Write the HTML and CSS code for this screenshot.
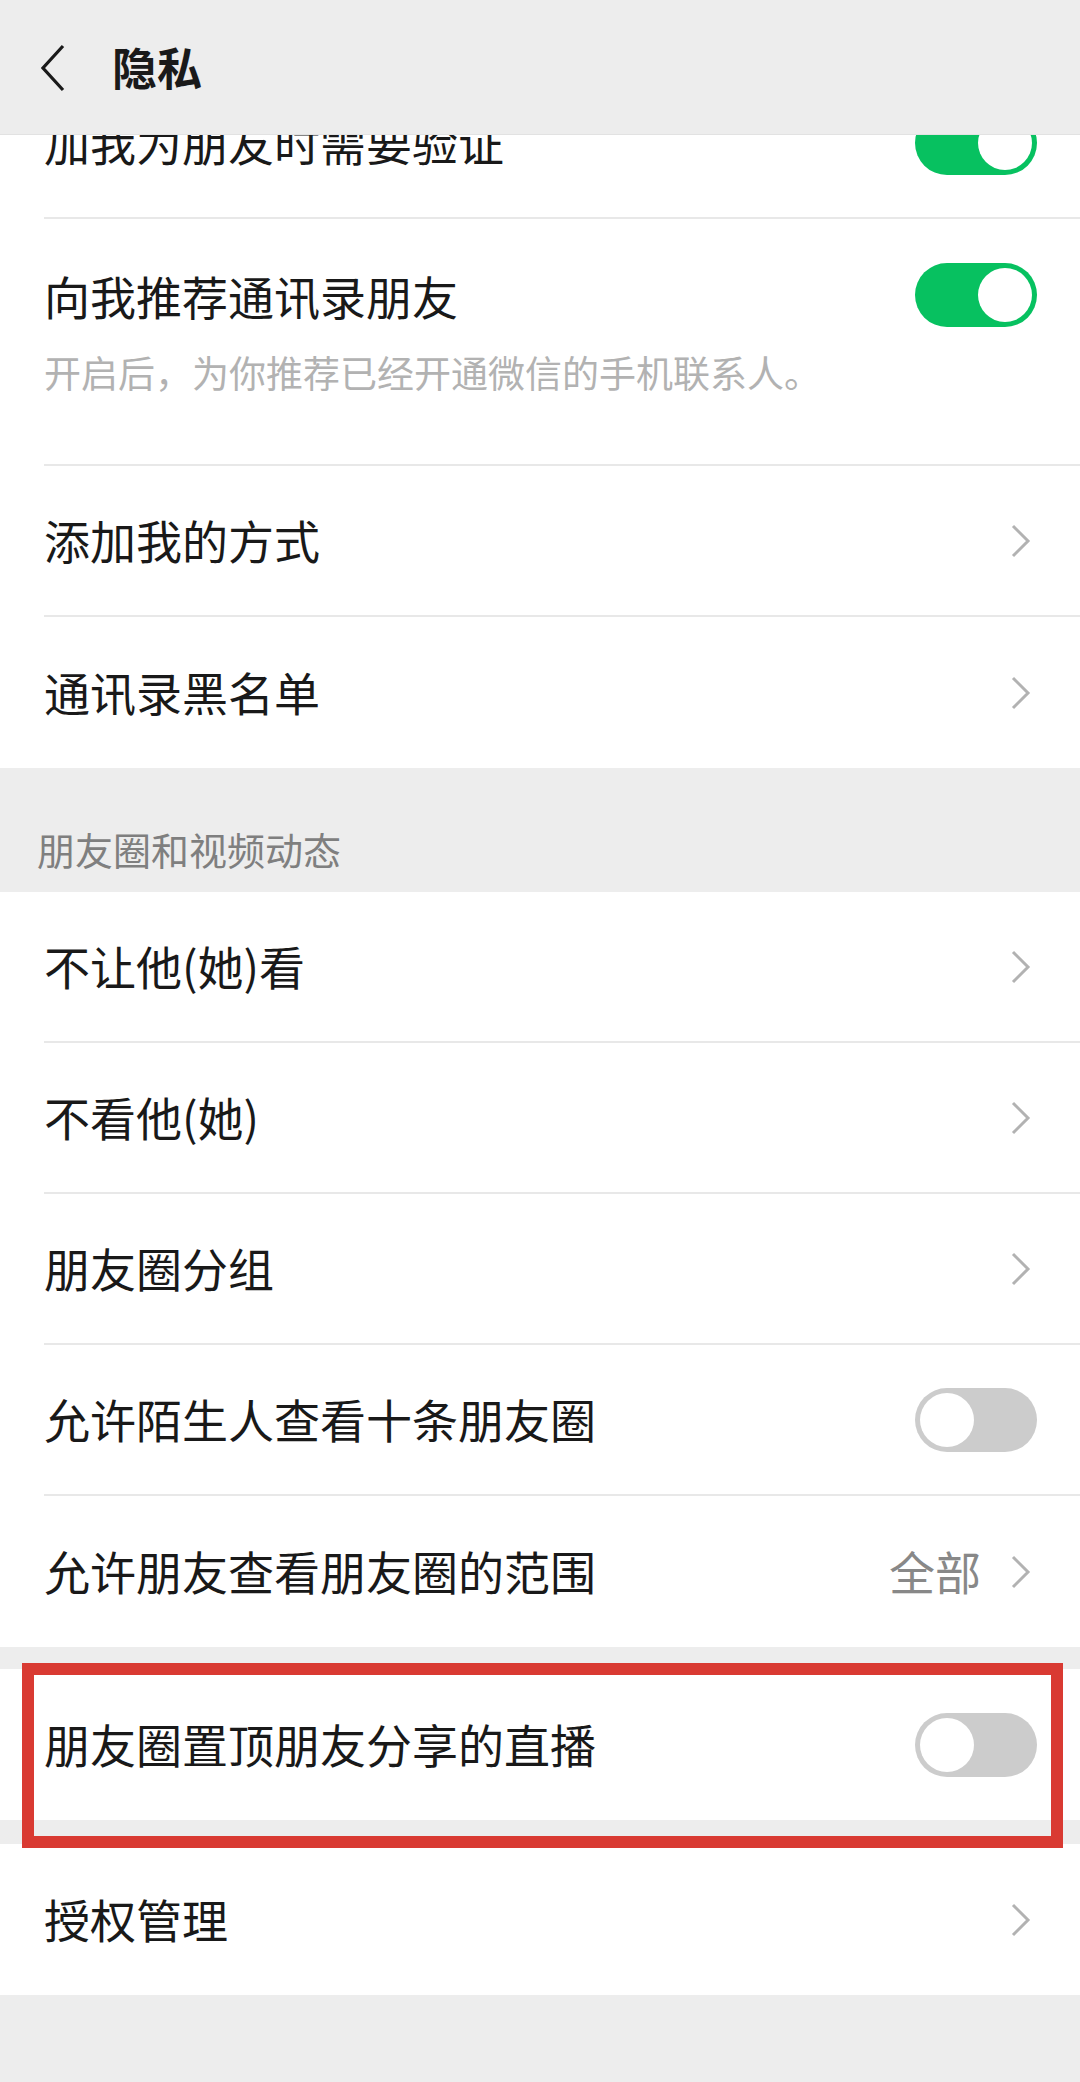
FILE: index.html
```html
<!DOCTYPE html>
<html lang="zh-CN">
<head>
<meta charset="utf-8">
<title>隐私</title>
<link rel="stylesheet" href="styles.css">
</head>
<body>
<header class="nav">
  <svg class="back" width="26" height="48" viewBox="0 0 26 48"><polyline points="22,2 2,24 22,46" fill="none" stroke="#1a1a1a" stroke-width="3.2" stroke-linejoin="miter"/></svg>
  <h1 class="nav-title">隐私</h1>
</header>
<main class="content">
  <section class="group">
    <div class="row">
      <span class="label">加我为朋友时需要验证</span>
      <span class="switch on"><span class="knob"></span></span>
    </div>
    <div class="row tall">
      <div class="text-block">
        <div class="label title-line">向我推荐通讯录朋友</div>
        <div class="desc">开启后，为你推荐已经开通微信的手机联系人。</div>
      </div>
      <span class="switch on"><span class="knob"></span></span>
    </div>
    <div class="row">
      <span class="label">添加我的方式</span>
      <svg class="chev" width="20" height="34" viewBox="0 0 20 34"><polyline points="2,2 17,17 2,32" fill="none" stroke="#b2b2b2" stroke-width="3"/></svg>
    </div>
    <div class="row">
      <span class="label">通讯录黑名单</span>
      <svg class="chev" width="20" height="34" viewBox="0 0 20 34"><polyline points="2,2 17,17 2,32" fill="none" stroke="#b2b2b2" stroke-width="3"/></svg>
    </div>
  </section>

  <div class="section-title">朋友圈和视频动态</div>

  <section class="group">
    <div class="row">
      <span class="label">不让他(她)看</span>
      <svg class="chev" width="20" height="34" viewBox="0 0 20 34"><polyline points="2,2 17,17 2,32" fill="none" stroke="#b2b2b2" stroke-width="3"/></svg>
    </div>
    <div class="row">
      <span class="label">不看他(她)</span>
      <svg class="chev" width="20" height="34" viewBox="0 0 20 34"><polyline points="2,2 17,17 2,32" fill="none" stroke="#b2b2b2" stroke-width="3"/></svg>
    </div>
    <div class="row">
      <span class="label">朋友圈分组</span>
      <svg class="chev" width="20" height="34" viewBox="0 0 20 34"><polyline points="2,2 17,17 2,32" fill="none" stroke="#b2b2b2" stroke-width="3"/></svg>
    </div>
    <div class="row">
      <span class="label">允许陌生人查看十条朋友圈</span>
      <span class="switch off"><span class="knob"></span></span>
    </div>
    <div class="row">
      <span class="label">允许朋友查看朋友圈的范围</span>
      <span class="value">全部</span>
      <svg class="chev" width="20" height="34" viewBox="0 0 20 34"><polyline points="2,2 17,17 2,32" fill="none" stroke="#b2b2b2" stroke-width="3"/></svg>
    </div>
  </section>

  <section class="group highlight">
    <div class="row">
      <span class="label">朋友圈置顶朋友分享的直播</span>
      <span class="switch off"><span class="knob"></span></span>
    </div>
  </section>

  <section class="group gap-lg">
    <div class="row">
      <span class="label">授权管理</span>
      <svg class="chev" width="20" height="34" viewBox="0 0 20 34"><polyline points="2,2 17,17 2,32" fill="none" stroke="#b2b2b2" stroke-width="3"/></svg>
    </div>
  </section>
</main>
</body>
</html>
```
FILE: styles.css
```css
* { box-sizing: border-box; }
html, body {
  margin: 0;
  padding: 0;
  background: #ededed;
}
body {
  width: 1080px;
  min-height: 2082px;
  font-family: "Noto Sans CJK SC", "Noto Sans", sans-serif;
  color: #191919;
  overflow: hidden;
}
.nav {
  position: fixed;
  top: 0;
  left: 0;
  right: 0;
  height: 135px;
  background: #ededed;
  border-bottom: 1px solid #e2e2e2;
  display: flex;
  align-items: center;
  padding-left: 41px;
  z-index: 10;
}
.back {
  display: block;
  margin-top: 2px;
}
.nav-title {
  margin: 0 0 0 45px;
  font-size: 45px;
  line-height: 45px;
  font-weight: 700;
  color: #1a1a1a;
  margin-top: -1px;
}
.content {
  padding-top: 68px;
}
.group {
  background: #ffffff;
}
.row {
  display: flex;
  align-items: center;
  height: 151px;
  margin-left: 44px;
  padding-right: 43px;
  border-bottom: 2px solid #e8e8e8;
}
.row:last-child {
  border-bottom: none;
}
.label {
  flex: 1;
  font-size: 46px;
  line-height: 46px;
  color: #191919;
  white-space: nowrap;
  margin-top: -4px;
}
.row.tall {
  height: 247px;
  align-items: flex-start;
  padding-top: 44px;
}
.text-block {
  flex: 1;
  display: flex;
  flex-direction: column;
}
.title-line {
  line-height: 64px;
  margin-top: 0;
  flex: none;
}
.desc {
  margin-top: 27px;
  font-size: 37px;
  line-height: 37px;
  color: #b2b2b2;
  white-space: nowrap;
}
.value {
  font-size: 46px;
  line-height: 46px;
  color: #888888;
  margin-right: 30px;
  margin-top: -4px;
}
.chev {
  display: block;
  margin-right: 6px;
}
.switch {
  position: relative;
  display: block;
  width: 122px;
  height: 64px;
  border-radius: 32px;
  flex: none;
}
.switch.on { background: #07c160; }
.switch.off { background: #cccccc; }
.switch .knob {
  position: absolute;
  top: 5px;
  width: 54px;
  height: 54px;
  border-radius: 50%;
  background: #ffffff;
}
.switch.on .knob { right: 5px; }
.switch.off .knob { left: 5px; }
.section-title {
  height: 124px;
  padding: 62px 37px 0;
  font-size: 38px;
  line-height: 38px;
  color: #7f7f7f;
}
.highlight {
  position: relative;
  margin-top: 22px;
}
.highlight::after {
  content: "";
  position: absolute;
  top: -6px;
  bottom: -28px;
  left: 22px;
  right: 17px;
  border: 12px solid #d93a32;
  pointer-events: none;
}
.gap-lg {
  margin-top: 24px;
}
```
